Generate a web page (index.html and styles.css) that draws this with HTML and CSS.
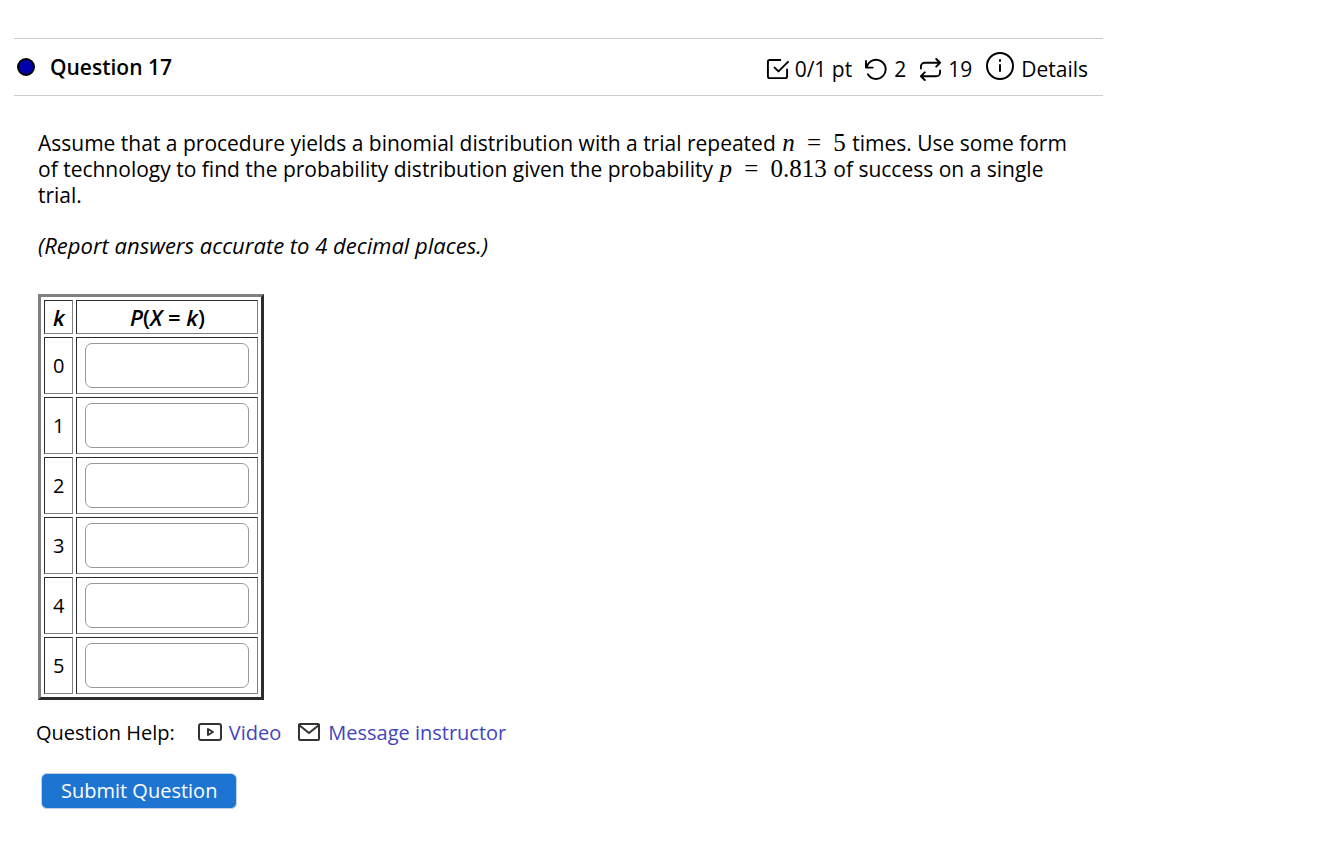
FILE: index.html
```html
<!DOCTYPE html>
<html lang="en">
<head>
    <meta charset="UTF-8">
    <meta name="viewport" content="width=device-width, initial-scale=1.0">
    <title>Question 17</title>

    <link rel="stylesheet" href="styles.css">
</head>
<body>
    <main class="question-wrap">
        <header class="question-header">
            <div class="title">
                <span class="dot"></span>
                <h2>Question 17</h2>
            </div>
            <div class="info">
                <span class="info-item">
                    <svg class="icon" viewBox="0 0 24 24"><path d="M15 2H4a2 2 0 0 0-2 2v15a2 2 0 0 0 2 2h16a2 2 0 0 0 2-2v-7M9 10l4 4L23 4"/></svg>
                    0/1 pt
                </span>
                <span class="info-item">
                    <svg class="icon" viewBox="0 0 24 24"><path d="M1 3v7h7M2 9a10 10 0 1 1 1 8"/></svg>
                    2
                </span>
                <span class="info-item">
                    <svg class="icon" viewBox="0 0 24 24"><path d="M18 1l4 4-4 4M2 11V9a4 4 0 0 1 4-4h16M6 23l-4-4 4-4M22 13v2a4 4 0 0 1-4 4H2"/></svg>
                    19
                </span>
                <a href="#" class="info-item details">
                    <svg class="icon-info" viewBox="0 0 30 30"><circle cx="15" cy="15" r="13"/><path d="M15 14v6M15 9v1"/></svg>
                    Details
                </a>
            </div>
        </header>

        <form class="question">
            <p>Assume that a procedure yields a binomial distribution with a trial repeated <span class="math"><i>n</i> <span class="eq">=</span> 5</span> times. Use some form<br>
            of technology to find the probability distribution given the probability <span class="math"><i>p</i> <span class="eq">=</span> 0.813</span> of success on a single<br>
            trial.</p>
            <p><em>(Report answers accurate to 4 decimal places.)</em></p>

            <table>
                <thead>
                    <tr><th><i>k</i></th><th><i>P</i>(<i>X</i> = <i>k</i>)</th></tr>
                </thead>
                <tbody>
                    <tr><td><label for="k0">0</label></td><td><input type="text" id="k0"></td></tr>
                    <tr><td><label for="k1">1</label></td><td><input type="text" id="k1"></td></tr>
                    <tr><td><label for="k2">2</label></td><td><input type="text" id="k2"></td></tr>
                    <tr><td><label for="k3">3</label></td><td><input type="text" id="k3"></td></tr>
                    <tr><td><label for="k4">4</label></td><td><input type="text" id="k4"></td></tr>
                    <tr><td><label for="k5">5</label></td><td><input type="text" id="k5"></td></tr>
                </tbody>
            </table>

            <div class="help">
                <span class="help-label">Question Help:</span>
                <a href="#">
                    <svg class="icon-help" viewBox="0 0 24 20"><rect x="1" y="1" width="22" height="16" rx="2"/><path d="M10 6v6l5-3z"/></svg>
                    Video
                </a>
                <a href="#">
                    <svg class="icon-help" viewBox="0 0 24 20"><rect x="2" y="1" width="20" height="16" rx="1"/><path d="M2 2l10 8 10-8"/></svg>
                    Message instructor
                </a>
            </div>

            <button type="button" class="submit">Submit Question</button>
        </form>
    </main>
</body>
</html>
```
FILE: styles.css
```css
body{
    margin: 38px 14px;
    font-family: "Open Sans", sans-serif;
    font-size: 21px;
    line-height: 26px;
    color: #000;
    background-color: #fff;
}
.question-wrap{
    max-width: 1089px;
}
.question-header{
    display: flex;
    align-items: center;
    justify-content: space-between;
    min-height: 56px;
    padding: 0 15px 0 3px;
    border-top: 1px solid #ccc;
    border-bottom: 1px solid #ccc;
}
.title{
    display: flex;
    align-items: center;
    gap: 15px;
}
.title h2{
    margin: 0;
    font-size: 21px;
    font-weight: 600;
}
.dot{
    box-sizing: border-box;
    width: 18px;
    height: 18px;
    border: 2px solid #000;
    border-radius: 50%;
    background-color: #00a;
}
.info{
    display: flex;
    align-items: center;
    gap: 13px;
    padding-top: 4px;
}
.info-item{
    display: flex;
    align-items: center;
    gap: 6px;
    color: #000;
    text-decoration: none;
}
svg{
    fill: none;
    stroke: #000;
    stroke-width: 2;
    stroke-linecap: round;
    stroke-linejoin: round;
}
.icon{
    width: 23px;
    height: 23px;
}
.icon-info{
    width: 30px;
    height: 30px;
    margin-bottom: 6px;
}
.question{
    padding: 34px 24px 0;
}
.question p{
    margin: 0 0 24px;
}
.question em{
    font-size: 22px;
}
.math{
    margin: 0 1px;
    font-family: "Liberation Serif", serif;
    font-size: 25px;
    line-height: 20px;
}
.eq{
    margin: 0 6px;
}
table{
    margin-top: 35px;
    border: 3px solid;
    border-color: #808080 #2c2c2c #2c2c2c #808080;
    border-spacing: 3px;
}
th, td{
    padding: 5px 8px;
    border: 1px solid;
    border-color: #2c2c2c #808080 #808080 #2c2c2c;
    font-size: 20px;
    text-align: center;
}
th{
    padding: 3px 7px;
    font-size: 22px;
    font-weight: 600;
}
td input{
    display: block;
    box-sizing: border-box;
    width: 164px;
    height: 45px;
    padding: 4px 8px;
    border: 1px solid #999;
    border-radius: 7px;
    font: inherit;
}
.help{
    display: flex;
    gap: 16px;
    margin: 20px 0 27px -2px;
    font-size: 20px;
}
.help-label{
    margin-right: 7px;
}
.help a{
    display: flex;
    align-items: center;
    gap: 7px;
    color: #44b;
    text-decoration: none;
}
.icon-help{
    width: 24px;
    height: 20px;
    stroke: #333;
}
.submit{
    margin-left: 3px;
    padding: 4px 19px;
    border: 1px solid #c0d0e8;
    border-radius: 6px;
    font: inherit;
    font-size: 20px;
    color: #fff;
    background-color: #1e74d1;
}
```
